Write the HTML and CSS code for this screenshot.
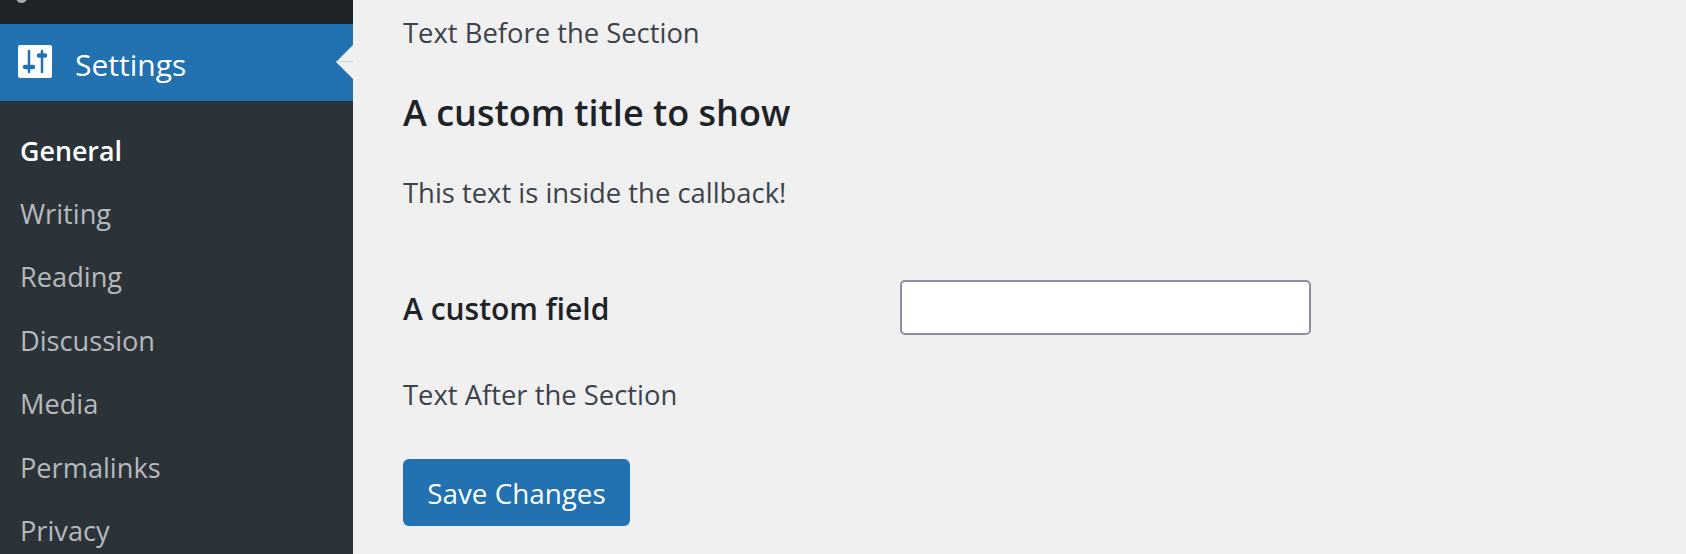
FILE: index.html
```html
<!DOCTYPE html>
<html lang="en">
<head>
  <meta charset="UTF-8" />
  <title>General Settings</title>
  <link rel="stylesheet" href="styles.css">
</head>
<body>
  <div class="page">
    <!-- Admin menu -->
    <aside class="sidebar">
      <div class="top-item"><span class="top-dot"></span></div>
      <div class="current-menu">
        <svg class="menu-icon" viewBox="0 0 34 33" aria-hidden="true">
          <rect width="34" height="33" rx="2" fill="#fff"/>
          <path d="M11 6v21M24 6v21" fill="none" stroke="#2271b1" stroke-width="2.500" stroke-linecap="round"/>
          <path d="M7 22h8M21 10.500h6" fill="none" stroke="#2271b1" stroke-width="4.500" stroke-linecap="round"/>
        </svg>
        <span class="menu-label">Settings</span>
        <span class="menu-arrow"></span>
      </div>
      <ul class="submenu">
        <li class="active">General</li>
        <li>Writing</li>
        <li>Reading</li>
        <li>Discussion</li>
        <li>Media</li>
        <li>Permalinks</li>
        <li>Privacy</li>
      </ul>
    </aside>

    <!-- Settings form -->
    <main class="content">
      <p class="text-before">Text Before the Section</p>
      <h2>A custom title to show</h2>
      <p class="callback-text">This text is inside the callback!</p>
      <div class="field-row">
        <label class="field-label" for="custom-field">A custom field</label>
        <input class="field-input" id="custom-field" type="text" />
      </div>
      <p class="text-after">Text After the Section</p>
      <button class="save-button">Save Changes</button>
    </main>
  </div>
</body>
</html>
```
FILE: styles.css
```css
html, body {
  margin: 0;
  padding: 0;
  height: 100%;
  overflow: hidden;
}

body {
  font-family: 'Open Sans', 'Noto Sans', sans-serif;
  background-color: #f0f0f1;
  color: #3c434a;
}

.page {
  display: flex;
  height: 554px;
}

.sidebar {
  width: 353px;
  flex-shrink: 0;
  background-color: #2c3338;
  overflow: hidden;
}

.top-item {
  height: 24px;
  background-color: #1d2327;
  overflow: hidden;
  padding-left: 16px;
}

.top-dot {
  display: block;
  width: 11px;
  height: 11px;
  margin-top: -8px;
  border-radius: 50%;
  background-color: #a7aaad;
}

.current-menu {
  position: relative;
  display: flex;
  align-items: center;
  height: 77px;
  padding-left: 18px;
  background-color: #2271b1;
  color: white;
}

.menu-icon {
  width: 34px;
  height: 33px;
  margin-top: -2px;
}

.menu-label {
  margin-left: 23px;
  padding-top: 4px;
  font-size: 30px;
}

.menu-arrow {
  position: absolute;
  right: 0;
  top: 21px;
  border: 17px solid transparent;
  border-left-width: 0;
  border-right-color: #f0f0f1;
}

.menu-arrow::after {
  content: "";
  position: absolute;
  left: 0;
  top: -1px;
  width: 17px;
  height: 1px;
  background-color: #c9d6e2;
}

.submenu {
  list-style: none;
  margin: 0;
  padding: 18px 0 0 20px;
  font-size: 27.200px;
  color: #b4b9be;
}

.submenu li {
  height: 63.500px;
  line-height: 63.500px;
}

.submenu .active {
  height: 62.500px;
  color: white;
  font-size: 26.800px;
  font-weight: 600;
}

.content {
  flex: 1;
  padding-left: 50px;
  font-size: 27.400px;
}

.content p {
  margin: 0;
}

.text-before {
  margin-top: 13px !important;
  line-height: 40px;
}

h2 {
  margin: 37px 0 0;
  font-size: 36px;
  font-weight: 600;
  line-height: 46px;
  color: #1d2327;
}

.callback-text {
  margin-top: 36.500px !important;
  line-height: 40px;
}

.field-row {
  display: flex;
  align-items: center;
  margin-top: 67px;
}

.field-label {
  width: 497px;
  padding-top: 2px;
  font-size: 30px;
  font-weight: 600;
  color: #1d2327;
}

.field-input {
  box-sizing: border-box;
  width: 411px;
  height: 55px;
  border: 2px solid #8c8f9f;
  border-radius: 5px;
  background: white;
}

.text-after {
  margin-top: 40px !important;
  line-height: 40px;
}

.save-button {
  display: block;
  width: 227px;
  height: 67px;
  margin-top: 44px;
  padding: 2px 0 0;
  border: none;
  border-radius: 6px;
  background-color: #2271b1;
  color: white;
  font-family: inherit;
  font-size: 27.800px;
}
```
